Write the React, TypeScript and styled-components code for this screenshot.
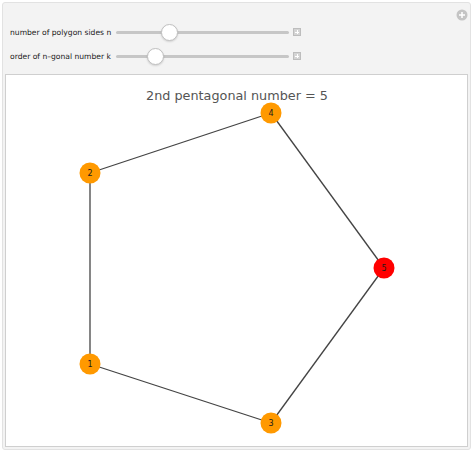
import React from 'react';
import styled, { createGlobalStyle } from 'styled-components';

const GlobalStyle = createGlobalStyle`
  html, body {
    margin: 0;
    padding: 0;
    background: #ffffff;
  }
`;

const Panel = styled.div`
  position: relative;
  box-sizing: border-box;
  width: 469px;
  height: 448px;
  margin: 2px 0 0 2px;
  background: #f3f3f3;
  border: 1px solid #e2e2e2;
  border-radius: 3px;
  display: flex;
  flex-direction: column;
`;

const Controls = styled.div`
  padding: 17px 0 0 7px;
  display: flex;
  flex-direction: column;
`;

const Row = styled.div`
  height: 24px;
  display: flex;
  align-items: center;
`;

const Label = styled.span`
  width: 106px;
  flex: none;
  font-family: 'DejaVu Sans', 'Liberation Sans', sans-serif;
  font-size: 7.6px;
  color: #1a1a1a;
  white-space: nowrap;
`;

const Track = styled.div`
  position: relative;
  width: 173px;
  height: 3px;
  border-radius: 2px;
  background: #c6c6c6;
`;

const Thumb = styled.div`
  position: absolute;
  top: 50%;
  width: 15px;
  height: 15px;
  margin: -8px 0 0 -8px;
  border-radius: 50%;
  background: #ffffff;
  border: 1px solid #c0c0c0;
  box-shadow: 0 1px 2px rgba(0, 0, 0, 0.15);
`;

const PlusBox = styled.div`
  margin-left: 4px;
  width: 8px;
  height: 8px;
  box-sizing: border-box;
  border: 1px solid #bdbdbd;
  background: #d4d4d4;
  position: relative;
  &::before,
  &::after {
    content: '';
    position: absolute;
    background: #ffffff;
  }
  &::before {
    left: 2.5px;
    top: 1px;
    width: 1px;
    height: 4px;
  }
  &::after {
    left: 1px;
    top: 2.5px;
    width: 4px;
    height: 1px;
  }
`;

const Corner = styled.svg`
  position: absolute;
  top: 6px;
  right: 2px;
`;

const Plot = styled.div`
  box-sizing: border-box;
  margin: 6px 2px 0 2px;
  height: 373px;
  background: #ffffff;
  border: 1px solid #cfcfcf;
`;

type Slider = { label: string; pos: number };

const sliders: Slider[] = [
  { label: 'number of polygon sides n', pos: 53 },
  { label: 'order of n\u2013gonal number k', pos: 39 },
];

type Node = { id: number; x: number; y: number; color: string };

const nodes: Node[] = [
  { id: 1, x: 84, y: 289, color: '#ff9900' },
  { id: 2, x: 84, y: 98, color: '#ff9900' },
  { id: 3, x: 265, y: 348, color: '#ff9900' },
  { id: 4, x: 265, y: 38, color: '#ff9900' },
  { id: 5, x: 378, y: 193, color: '#ff0000' },
];

const edges: [number, number][] = [
  [2, 4],
  [4, 5],
  [5, 3],
  [3, 1],
  [1, 2],
];

const byId = (id: number) => nodes.find((n) => n.id === id)!;

const Graph = () => (
  <svg width="461" height="371" style={{ display: 'block' }}>
    <text
      x="231"
      y="25"
      textAnchor="middle"
      fontFamily="'DejaVu Sans', 'Liberation Sans', sans-serif"
      fontSize="12.8"
      fill="#545454"
    >
      2nd pentagonal number = 5
    </text>
    {edges.map(([a, b]) => {
      const p = byId(a);
      const q = byId(b);
      return (
        <line
          key={`${a}-${b}`}
          x1={p.x}
          y1={p.y}
          x2={q.x}
          y2={q.y}
          stroke="#444"
          strokeWidth="1.3"
        />
      );
    })}
    {nodes.map((n) => (
      <g key={n.id}>
        <circle cx={n.x} cy={n.y} r="10.5" fill={n.color} />
        <text
          x={n.x}
          y={n.y + 3}
          textAnchor="middle"
          fontFamily="'DejaVu Sans', 'Liberation Sans', sans-serif"
          fontSize="8"
          fill="#1a1a1a"
        >
          {n.id}
        </text>
      </g>
    ))}
  </svg>
);

export default function App() {
  return (
    <>
      <GlobalStyle />
      <Panel>
        <Corner width="12" height="12" viewBox="0 0 12 12">
          <circle cx="6" cy="6" r="5.5" fill="#c4c4c4" />
          <path d="M6 3v6M3 6h6" stroke="#fff" strokeWidth="1.5" />
        </Corner>
        <Controls>
          {sliders.map((s) => (
            <Row key={s.label}>
              <Label>{s.label}</Label>
              <Track>
                <Thumb style={{ left: `${s.pos}px` }} />
              </Track>
              <PlusBox />
            </Row>
          ))}
        </Controls>
        <Plot>
          <Graph />
        </Plot>
      </Panel>
    </>
  );
}
